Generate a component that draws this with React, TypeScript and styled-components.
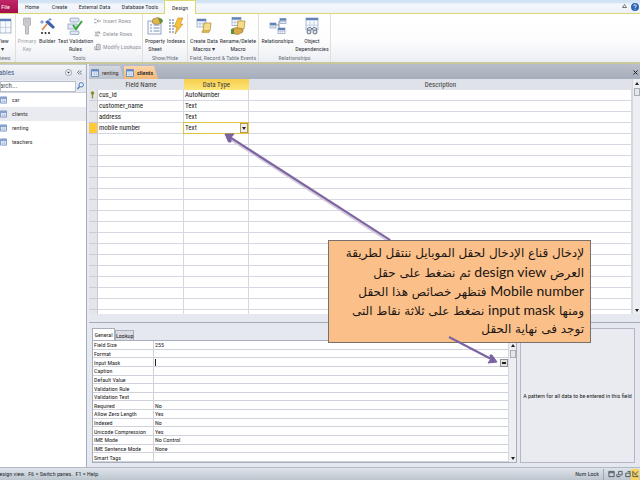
import React from "react";
import styled, { createGlobalStyle } from "styled-components";

const Global = createGlobalStyle`
  * { box-sizing: border-box; }
  html, body { margin: 0; padding: 0; }
  body { background: #e8eaf1; overflow: hidden; }
  button, input, select, table { font: inherit; color: inherit; }
  button { border: 0; background: none; padding: 0; margin: 0; }
`;

const gridLine = "#d5d8e0";
const yellow = "#d9d871";

const Window = styled.div`
  position: relative;
  display: flex;
  flex-direction: column;
  height: 100vh;
  overflow: hidden;
  font: 6px/8px "Roboto Condensed", Roboto, sans-serif;
  color: #30343b;
`;

/* ---------- ribbon ---------- */
const TabStrip = styled.nav`
  display: flex;
  align-items: stretch;
  height: 14px;
  background: linear-gradient(#cfe1f3 0, #d8e7f5 3px, #f4f7fb 4px, #eef1f7 100%);
  border-bottom: 1px solid ${yellow};
`;
const FileTab = styled.button`
  width: 18px;
  padding-right: 7px;
  background: linear-gradient(#c02668, #a50f4c);
  color: #fff;
  text-align: center;
`;
const RibbonTab = styled.button<{ $w: number; $active?: boolean }>`
  width: ${(p) => p.$w}px;
  margin-bottom: ${(p) => (p.$active ? "-1px" : "0")};
  background: ${(p) => (p.$active ? "#fefefa" : "none")};
  border: ${(p) => (p.$active ? `1px solid ${yellow}` : "0")};
  border-bottom: 0;
  white-space: nowrap;
`;
const StripTools = styled.div`
  margin-left: auto;
  display: flex;
  align-items: center;
  gap: 4px;
  padding-right: 1px;
`;
const Ribbon = styled.section`
  display: flex;
  height: 50px;
  background: linear-gradient(#fff, #fdfdfd 55%, #eceef4);
  border-bottom: 2px solid #c9c89a;
`;
const Group = styled.div<{ $w: number; $cut?: boolean }>`
  display: flex;
  flex-direction: column;
  justify-content: space-between;
  width: ${(p) => p.$w}px;
  margin-left: ${(p) => (p.$cut ? "-8px" : "0")};
  padding: 3px 1px 0;
  border-right: 1px solid #dfe1d6;
`;
const GroupItems = styled.div`
  display: flex;
  justify-content: space-between;
`;
const GroupLabel = styled.div`
  text-align: center;
  white-space: nowrap;
  color: #6d717a;
`;
const BigButton = styled.button<{ $w: number; $off?: boolean }>`
  display: flex;
  flex-direction: column;
  align-items: center;
  gap: 2px;
  width: ${(p) => p.$w}px;
  color: ${(p) => (p.$off ? "#a2a5ab" : "inherit")};
  white-space: nowrap;
  svg { width: 18px; height: 18px; }
`;
const SmallList = styled.div`
  display: flex;
  flex-direction: column;
  gap: 5px;
`;
const SmallButton = styled.button`
  display: flex;
  align-items: center;
  gap: 2px;
  color: #94979d;
  white-space: nowrap;
  svg { width: 7px; height: 8px; }
`;

/* ---------- work area ---------- */
const Work = styled.div`
  flex: 1;
  display: flex;
  min-height: 0;
`;
const Nav = styled.aside`
  width: 87px;
  background: #fff;
  border-right: 1px solid #a4abba;
`;
const NavHead = styled.header`
  display: flex;
  align-items: center;
  height: 16px;
  padding-right: 4px;
  gap: 5px;
  background: linear-gradient(#f2f4f8, #dde1ea);
  border-top: 1px solid #c6cbd6;
  color: #3f5883;
  font-size: 7px;
`;
const NavTitle = styled.span`
  flex: 1;
  margin-left: -4px;
`;
const SearchRow = styled.label`
  display: flex;
  align-items: center;
  height: 13px;
  padding-right: 2px;
  background: #e6e9f0;
  border-bottom: 1px solid #cdd2dc;
`;
const SearchInput = styled.input`
  flex: 1;
  min-width: 0;
  height: 11px;
  padding: 0;
  margin-right: 1px;
  border: 1px solid #b8bfcd;
  background: #fff;
  text-indent: -8px;
  font-size: 7px;
  &::placeholder { color: #555; opacity: 1; }
`;
const NavList = styled.ul`
  list-style: none;
  margin: 0;
  padding: 0;
`;
const NavItem = styled.li<{ $active?: boolean }>`
  display: flex;
  align-items: center;
  gap: 5px;
  height: 14px;
  background: ${(p) => (p.$active ? "#eaebf0" : "#fff")};
  svg { width: 7px; height: 8px; }
`;
const NavLink = styled.a`
  color: #333;
  text-decoration: none;
`;
const Document = styled.main`
  flex: 1;
  min-width: 0;
  display: flex;
  flex-direction: column;
  margin-left: 2px;
`;
const DocTabs = styled.div`
  display: flex;
  align-items: flex-end;
  height: 15px;
  padding-right: 2px;
  background: linear-gradient(#b8bfca, #a7aebb);
`;
const DocTab = styled.button<{ $active?: boolean }>`
  display: flex;
  align-items: center;
  gap: 3px;
  height: 13px;
  width: ${(p) => (p.$active ? 34 : 35)}px;
  padding-left: 2px;
  font-weight: ${(p) => (p.$active ? "bold" : "normal")};
  color: #39312d;
  background: ${(p) => (p.$active ? "linear-gradient(#fbd6ab,#f3b777)" : "linear-gradient(#d4d8e0,#bbc1cc)")};
  clip-path: polygon(0 0, 88% 0, 100% 100%, 0 100%);
  svg { width: 8px; height: 8px; flex: none; }
`;
const CloseButton = styled.button`
  margin-left: auto;
  height: 14px;
  display: flex;
  align-items: center;
  svg { width: 5px; height: 5px; }
`;
const DesignArea = styled.div`
  flex: 1;
  min-height: 0;
  display: flex;
  overflow: hidden;
  background: #fff;
`;
const GridBox = styled.div`
  flex: 1;
  overflow: hidden;
`;
const FieldTable = styled.table`
  width: 100%;
  table-layout: fixed;
  border-collapse: separate;
  border-spacing: 0;
  font-size: 7px;
  line-height: 10px;
  color: #1c1c1c;
  th, td { padding: 0; height: 11px; white-space: nowrap; }
`;
const HeadCell = styled.th<{ $hot?: boolean }>`
  font-weight: normal;
  color: #3c3c3c;
  background: ${(p) => (p.$hot ? "linear-gradient(#f6cf4c,#ffe579)" : "#dfe2e8")};
`;
const Selector = styled.td<{ $active?: boolean }>`
  background: ${(p) => (p.$active ? "#fdc93b" : "#e3e5ea")};
  border-right: 1px solid #c9ccd4;
  border-bottom: 1px solid #c9ccd4;
  svg { display: block; width: 5px; height: 8px; margin-left: 1px; }
`;
const Cell = styled.td`
  border-right: 1px solid ${gridLine};
  border-bottom: 1px solid ${gridLine};
  && { padding-left: 1px; }
`;
const TypePicker = styled.div`
  display: flex;
  height: 12px;
  margin: -1px -1px -1px -2px;
  border: 1px solid #e0c440;
  background: #fff;
`;
const TypeSelect = styled.select`
  appearance: none;
  flex: 1;
  min-width: 0;
  border: 0;
  padding: 0 0 0 1px;
  background: none;
`;
const DropMark = styled.span`
  width: 8px;
  display: flex;
  align-items: center;
  justify-content: center;
  border: 1px solid #b99a4b;
  background: #edeef1;
  svg { width: 4px; height: 3px; }
`;
const ScrollTrack = styled.div`
  width: 8px;
  display: flex;
  flex-direction: column;
  align-items: center;
  justify-content: space-between;
  padding-bottom: 2px;
  background: #eceef2;
  border-left: 1px solid #d4d7de;
  svg { width: 4px; height: 3px; }
`;
const ScrollTop = styled.div`
  display: flex;
  flex-direction: column;
  align-items: center;
  gap: 3px;
  padding-top: 3px;
`;
const Thumb = styled.div`
  width: 6px;
  height: 8px;
  border: 1px solid #a9adb8;
  background: #e4e6ea;
`;
const Splitter = styled.div`
  height: 9px;
  background: #e6e8f0;
  border-bottom: 1px solid #a4abba;
`;
const Lower = styled.section`
  display: flex;
  gap: 3px;
  padding: 5px 5px 4px 3px;
  background: #e6e8f0;
`;
const Props = styled.div`
  flex: 1;
  min-width: 0;
`;
const PropTabs = styled.div`
  display: flex;
  align-items: flex-end;
  height: 12px;
`;
const PropTab = styled.button<{ $active?: boolean }>`
  width: ${(p) => (p.$active ? 23 : 19)}px;
  height: ${(p) => (p.$active ? 12 : 10)}px;
  border: 1px solid #a9aebb;
  border-bottom: 0;
  background: ${(p) => (p.$active ? "#fff" : "#dadde5")};
  color: #222;
`;
const PropBox = styled.div`
  display: flex;
  border: 1px solid #a9aebb;
  background: #fff;
`;
const PropTable = styled.table`
  flex: 1;
  width: 100%;
  height: 121px;
  table-layout: fixed;
  border-collapse: separate;
  border-spacing: 0;
  line-height: 7px;
  color: #1c1c1c;
  th, td { padding: 0 0 0 1px; font-weight: normal; text-align: left; border-bottom: 1px solid #cfd2da; white-space: nowrap; }
  th { border-right: 1px solid #cfd2da; }
`;
const PropValue = styled.div`
  display: flex;
  height: 7px;
`;
const PropInput = styled.input<{ $focus?: boolean }>`
  flex: 1;
  min-width: 0;
  height: 7px;
  padding: 0;
  border: 0;
  border-left: ${(p) => (p.$focus ? "1px solid #222" : "0")};
  background: none;
`;
const BuildButton = styled.button`
  width: 8px;
  height: 8px;
  border: 1px solid #8f9299;
  background: #e4e2dc;
  display: flex;
  align-items: center;
  justify-content: center;
  svg { width: 4px; height: 2px; }
`;
const Hint = styled.aside`
  width: 115px;
  display: flex;
  align-items: center;
  justify-content: center;
  border: 1px solid #b3b8c4;
  background: #e9ebf1;
  white-space: nowrap;
  color: #222;
`;
const Status = styled.footer`
  display: flex;
  align-items: center;
  gap: 4px;
  height: 13px;
  padding-right: 1px;
  background: linear-gradient(#dfe4ea, #bcc5cd);
  border-top: 1px solid #b3b9c4;
  color: #282d33;
  svg { width: 7px; height: 8px; }
`;
const StatusText = styled.span`
  flex: 1;
  margin-left: -4px;
`;
const ViewButton = styled.button<{ $active?: boolean }>`
  width: 8px;
  height: 11px;
  display: flex;
  align-items: center;
  justify-content: center;
  background: ${(p) => (p.$active ? "#fbd45a" : "none")};
`;
const Views = styled.div`
  display: flex;
  padding-left: 3px;
  border-left: 1px solid #9fa6b0;
`;

/* ---------- annotation ---------- */
const Arrows = styled.svg`
  position: absolute;
  inset: 0;
  width: 640px;
  height: 480px;
  pointer-events: none;
`;
const Note = styled.p`
  position: absolute;
  left: 328px;
  top: 240px;
  width: 263px;
  margin: 0;
  padding: 2px 6px 4px;
  background: #fbc08a;
  border: 1px solid #77706c;
  color: #1c1613;
  font: 12px/20px "DejaVu Sans", sans-serif;
  white-space: nowrap;
`;
const NoteLine = styled.span`
  display: block;
  height: 19px;
`;
const Latin = styled.bdi`
  font-family: Lato, sans-serif;
  font-size: 14px;
`;

const TableIcon = () => (
  <svg viewBox="0 0 8 8">
    <path d="M.5.5h7v7h-7z" fill="#fff" stroke="#6f8fc0" />
    <path d="M1 1h6v1.6H1z" fill="#5f86c6" />
    <path d="M1 4h6M1 5.7h6M3.2 2.6v5M5.3 2.6v5" stroke="#9db4d8" strokeWidth=".6" />
  </svg>
);
const Down = () => (<svg viewBox="0 0 4 3"><path d="M0 0h4L2 3z" fill="#222" /></svg>);
const Up = () => (<svg viewBox="0 0 4 3"><path d="M0 3h4L2 0z" fill="#222" /></svg>);

const Sheet = ({ x, y, w = 9, h = 8 }: { x: number; y: number; w?: number; h?: number }) => (
  <g>
    <rect x={x} y={y} width={w} height={h} fill="#f6f9fd" stroke="#8c9dbb" strokeWidth=".7" />
    <rect x={x} y={y} width={w} height="2.2" fill="#5f82bb" />
    <path d={`M${x} ${y + h * 0.6}h${w}M${x + w / 3} ${y + 2}v${h - 2}M${x + (w * 2) / 3} ${y + 2}v${h - 2}`} stroke="#a9b8d2" strokeWidth=".6" />
  </g>
);
const Scroll = ({ x, y }: { x: number; y: number }) => (
  <g>
    <path d={`M${x + 1} ${y}h7l-1 8h-7z`} fill="#f6dc84" stroke="#ab8734" strokeWidth=".7" />
    <path d={`M${x - 1} ${y + 8}h7v1.6h-7z`} fill="#e9c257" stroke="#ab8734" strokeWidth=".5" />
  </g>
);

const icons: Record<string, React.ReactNode> = {
  view: <Sheet x={1} y={2} w={16} h={14} />,
  key: (
    <g fill="#c9cbcf" stroke="#a2a5aa" strokeWidth=".7">
      <path d="M5.500 1h7v7l-2 1v8h-3V9l-2-1z" />
      <circle cx="9" cy="3.600" r="1" fill="#fff" />
    </g>
  ),
  builder: (
    <g>
      <path d="M7 5l3-2 7 7-2 2z" fill="#3d62ad" />
      <path d="M4 13l5-6" stroke="#d9853e" strokeWidth="1.500" />
      <path d="M4 3v4M2 5h4M12 1v3M10.500 2.500h3" stroke="#5b86cd" strokeWidth=".9" />
      <circle cx="4" cy="16" r="1" fill="#222" /><circle cx="7.500" cy="16" r="1" fill="#222" /><circle cx="11" cy="16" r="1" fill="#222" />
    </g>
  ),
  rules: (
    <g>
      <rect x="4" y="1" width="9" height="4" rx="1" fill="#dfe8f4" stroke="#7f95b8" strokeWidth=".7" />
      <rect x="2" y="7" width="9" height="5" fill="#dfe8f4" stroke="#7f95b8" strokeWidth=".7" />
      <rect x="4" y="14" width="9" height="3.500" rx="1" fill="#dfe8f4" stroke="#7f95b8" strokeWidth=".7" />
      <path d="M7 8l3 4 6-8" fill="none" stroke="#3ba53c" strokeWidth="2" />
    </g>
  ),
  property: (
    <g>
      <rect x="2" y="4" width="13" height="13" fill="#fbfcfe" stroke="#7890ba" strokeWidth=".8" />
      <path d="M4 8h2M7.500 8h6M4 11h2M7.500 11h6M4 14h2M7.500 14h6" stroke="#7890ba" />
      <path d="M7 2l5-1.500 4 2-1 4-5 1-4-2z" fill="#dfb64b" stroke="#8d7130" strokeWidth=".6" />
      <path d="M12 1l4 1 1 3-3 1z" fill="#5d8f3d" />
    </g>
  ),
  indexes: (
    <g>
      <path d="M3 2v14M6 2v14" stroke="#8c9dbb" strokeWidth="1.500" strokeDasharray="2 1" />
      <path d="M11 1h5l-3 6h3L8 17l2-7H7z" fill="#f8c23c" stroke="#b98822" strokeWidth=".6" />
    </g>
  ),
  macro: <g><Sheet x={2} y={2} /><Scroll x={8} y={6} /></g>,
  rename: (
    <g>
      <Sheet x={3} y={0.500} /><Scroll x={8} y={4} />
      <path d="M3 12c3-2 7-1 10 0l1 3-5 2.500-6-1z" fill="#d9ab48" stroke="#8d7130" strokeWidth=".6" />
      <path d="M2 12h3v5H2z" fill="#5d8f3d" />
    </g>
  ),
  relations: (
    <g>
      <path d="M6 8h4V4h3M10 8v6h1" fill="none" stroke="#6f7f9b" strokeWidth=".8" />
      <Sheet x={1} y={6} w={6} h={5} /><Sheet x={11} y={1.500} w={6} h={5} /><Sheet x={9} y={11} w={7} h={5.500} />
    </g>
  ),
  depend: (
    <g>
      <Sheet x={3} y={1} w={12} h={12} />
      <path d="M4 13a2.500 2.500 0 0 1 5 0 2.500 2.500 0 0 1 5 0" fill="none" stroke="#667084" />
      <circle cx="6" cy="15" r="2" fill="#dfe3ea" stroke="#667084" /><circle cx="12" cy="15" r="2" fill="#dfe3ea" stroke="#667084" />
    </g>
  ),
};
const Icon = ({ name }: { name: string }) => <svg viewBox="0 0 18 18">{icons[name]}</svg>;

const Big = ({ icon, w, lines, off }: { icon: string; w: number; lines: string[]; off?: boolean }) => (
  <BigButton $w={w} $off={off} disabled={off}>
    <Icon name={icon} />
    <span>{lines.map((l, i) => <React.Fragment key={l}>{i > 0 && <br />}{l}</React.Fragment>)}</span>
  </BigButton>
);

const smallPaths = ["M0 2h3M0 6h3M4 4h4M5 2.500L3.500 4 5 5.500", "M1 2h6M1 4h4M1 6h5M5 1l2 3", "M3 1h4v6H3zM1 3v4h4M4 3h2M4 5h2"];
const fields = [["cus_id", "AutoNumber"], ["customer_name", "Text"], ["address", "Text"], ["mobile number", "Text"]];
const properties = [
  ["Field Size", "255"], ["Format", ""], ["Input Mask", ""], ["Caption", ""], ["Default Value", ""],
  ["Validation Rule", ""], ["Validation Text", ""], ["Required", "No"], ["Allow Zero Length", "Yes"],
  ["Indexed", "No"], ["Unicode Compression", "Yes"], ["IME Mode", "No Control"], ["IME Sentence Mode", "None"], ["Smart Tags", ""],
];

export default function App() {
  return (
    <Window>
      <Global />
      <TabStrip>
        <FileTab>File</FileTab>
        <RibbonTab $w={28}>Home</RibbonTab>
        <RibbonTab $w={27}>Create</RibbonTab>
        <RibbonTab $w={43}>External Data</RibbonTab>
        <RibbonTab $w={48}>Database Tools</RibbonTab>
        <RibbonTab $w={32} $active>Design</RibbonTab>
        <StripTools>
          <svg width="5" height="5" viewBox="0 0 5 5"><path d="M.5 3.500l2-3 2 3z" fill="#fff" stroke="#555" strokeWidth=".8" /></svg>
          <svg width="8" height="8" viewBox="0 0 8 8">
            <circle cx="4" cy="4" r="4" fill="#2f63b5" />
            <path d="M2.800 3a1.200 1.200 0 1 1 1.800 1q-.6.300-.6 1M4 5.800v.8" fill="none" stroke="#fff" strokeWidth=".9" />
          </svg>
        </StripTools>
      </TabStrip>
      <Ribbon>
        <Group $w={24} $cut>
          <GroupItems><Big icon="view" w={20} lines={["View", "▾"]} /></GroupItems>
          <GroupLabel>Views</GroupLabel>
        </Group>
        <Group $w={127}>
          <GroupItems>
            <Big icon="key" w={20} lines={["Primary", "Key"]} off />
            <Big icon="builder" w={19} lines={["Builder"]} />
            <Big icon="rules" w={36} lines={["Test Validation", "Rules"]} />
            <SmallList>
              {["Insert Rows", "Delete Rows", "Modify Lookups"].map((t, i) => (
                <SmallButton key={t} disabled>
                  <svg viewBox="0 0 8 8"><path d={smallPaths[i]} fill="none" stroke="#94979d" /></svg>{t}
                </SmallButton>
              ))}
            </SmallList>
          </GroupItems>
          <GroupLabel>Tools</GroupLabel>
        </Group>
        <Group $w={45}>
          <GroupItems>
            <Big icon="property" w={22} lines={["Property", "Sheet"]} />
            <Big icon="indexes" w={20} lines={["Indexes"]} />
          </GroupItems>
          <GroupLabel>Show/Hide</GroupLabel>
        </Group>
        <Group $w={71}>
          <GroupItems>
            <Big icon="macro" w={30} lines={["Create Data", "Macros ▾"]} />
            <Big icon="rename" w={38} lines={["Rename/Delete", "Macro"]} />
          </GroupItems>
          <GroupLabel>Field, Record &amp; Table Events</GroupLabel>
        </Group>
        <Group $w={72}>
          <GroupItems>
            <Big icon="relations" w={35} lines={["Relationships"]} />
            <Big icon="depend" w={34} lines={["Object", "Dependencies"]} />
          </GroupItems>
          <GroupLabel>Relationships</GroupLabel>
        </Group>
      </Ribbon>
      <Work>
        <Nav>
          <NavHead>
            <NavTitle>Tables</NavTitle>
            <svg width="7" height="7" viewBox="0 0 7 7"><circle cx="3.500" cy="3.500" r="3" fill="#fff" stroke="#7c8799" strokeWidth=".8" /><path d="M2 2.700h3L3.500 4.800z" fill="#333" /></svg>
            <svg width="5" height="5" viewBox="0 0 5 5"><path d="M2.300.500l-1.800 2 1.800 2M4.600.500l-1.800 2 1.800 2" fill="none" stroke="#4c5668" strokeWidth=".8" /></svg>
          </NavHead>
          <SearchRow>
            <SearchInput placeholder="Search..." aria-label="Search" />
            <svg width="7" height="8" viewBox="0 0 7 8"><circle cx="4.200" cy="2.800" r="2.200" fill="#eaf3fd" stroke="#4779b8" /><path d="M2.500 4.500L.500 7" stroke="#4779b8" strokeWidth="1.300" /></svg>
          </SearchRow>
          <NavList>
            {["car", "clients", "renting", "teachers"].map((t) => (
              <NavItem key={t} $active={t === "clients"}><TableIcon /><NavLink href="#">{t}</NavLink></NavItem>
            ))}
          </NavList>
        </Nav>
        <Document>
          <DocTabs>
            <DocTab><TableIcon />renting</DocTab>
            <DocTab $active><TableIcon />clients</DocTab>
            <CloseButton aria-label="Close"><svg viewBox="0 0 5 5"><path d="M.5.5l4 4M4.500.500l-4 4" stroke="#222" /></svg></CloseButton>
          </DocTabs>
          <DesignArea>
            <GridBox>
              <FieldTable>
                <colgroup><col style={{ width: 9 }} /><col style={{ width: 86 }} /><col style={{ width: 65 }} /><col /></colgroup>
                <thead>
                  <tr><HeadCell /><HeadCell>Field Name</HeadCell><HeadCell $hot>Data Type</HeadCell><HeadCell>Description</HeadCell></tr>
                </thead>
                <tbody>
                  {Array.from({ length: 21 }, (_, i) => (
                    <tr key={i}>
                      <Selector $active={i === 3}>
                        {i === 0 && <svg viewBox="0 0 5 8"><circle cx="2.500" cy="2" r="1.800" fill="#8d8f2c" /><path d="M2.500 3v4.500" stroke="#8d8f2c" strokeWidth="1.400" /></svg>}
                      </Selector>
                      <Cell>{fields[i]?.[0]}</Cell>
                      <Cell>
                        {i === 3 ? (
                          <TypePicker><TypeSelect aria-label="Data Type"><option>Text</option></TypeSelect><DropMark><Down /></DropMark></TypePicker>
                        ) : fields[i]?.[1]}
                      </Cell>
                      <Cell />
                    </tr>
                  ))}
                </tbody>
              </FieldTable>
            </GridBox>
            <ScrollTrack><ScrollTop><Up /><Thumb /></ScrollTop><Down /></ScrollTrack>
          </DesignArea>
          <Splitter />
          <Lower>
            <Props>
              <PropTabs><PropTab $active>General</PropTab><PropTab>Lookup</PropTab></PropTabs>
              <PropBox>
                <PropTable>
                  <colgroup><col style={{ width: 61 }} /><col /></colgroup>
                  <tbody>
                    {properties.map(([name, value]) => {
                      const focus = name === "Input Mask";
                      return (
                        <tr key={name}>
                          <th scope="row">{name}</th>
                          <td>
                            <PropValue>
                              <PropInput aria-label={name} defaultValue={value} $focus={focus} />
                              {focus && <BuildButton aria-label="Build"><svg viewBox="0 0 4 2"><path d="M0 0h4v2H0z" fill="#222" /></svg></BuildButton>}
                            </PropValue>
                          </td>
                        </tr>
                      );
                    })}
                  </tbody>
                </PropTable>
                <ScrollTrack><ScrollTop><Up /><Thumb /></ScrollTop><Down /></ScrollTrack>
              </PropBox>
            </Props>
            <Hint>A pattern for all data to be entered in this field</Hint>
          </Lower>
        </Document>
      </Work>
      <Status>
        <StatusText>Design view.&nbsp; F6 = Switch panes.&nbsp; F1 = Help.</StatusText>
        <span>Num Lock</span>
        <Views>
          {["M1 1h6v6H1zM1 2.500h6", "M3 1h4v4H3zM1 4v3h4", "M2 3h5v4H2zM4 1h3v2", "M1 1v6h6zM3 5l4-4"].map((d, i) => (
            <ViewButton key={d} $active={i === 3} aria-label={["Datasheet", "PivotTable", "PivotChart", "Design"][i]}>
              <svg viewBox="0 0 8 8"><path d={d} fill="none" stroke="#444b55" /></svg>
            </ViewButton>
          ))}
        </Views>
      </Status>
      <Arrows viewBox="0 0 640 480">
        <path d="M390 241L230 138" stroke="#d3c9dc" strokeWidth="4" />
        <path d="M390 240L228 136" fill="none" stroke="#7b62a0" strokeWidth="2" />
        <path d="M225 134l9 0-3 3.500 0 4.500-2.500 0z" fill="#7b62a0" stroke="#7b62a0" />
      </Arrows>
      <Note dir="rtl">
        <NoteLine>لإدخال قناع الإدخال لحقل الموبايل ننتقل لطريقة</NoteLine>
        <NoteLine>العرض <Latin>design view</Latin> ثم نضغط على حقل</NoteLine>
        <NoteLine><Latin>Mobile number</Latin> فتظهر خصائص هذا الحقل</NoteLine>
        <NoteLine>ومنها <Latin>input mask</Latin> نضغط على ثلاثة نقاط التى</NoteLine>
        <NoteLine>توجد فى نهاية الحقل</NoteLine>
      </Note>
      <Arrows viewBox="0 0 640 480">
        <path d="M449 337L493 360" fill="none" stroke="#7b62a0" strokeWidth="2" />
        <path d="M497 362l-9 1 2.500-3.500-.5-4.500 2 0z" fill="#7b62a0" stroke="#7b62a0" />
      </Arrows>
    </Window>
  );
}
